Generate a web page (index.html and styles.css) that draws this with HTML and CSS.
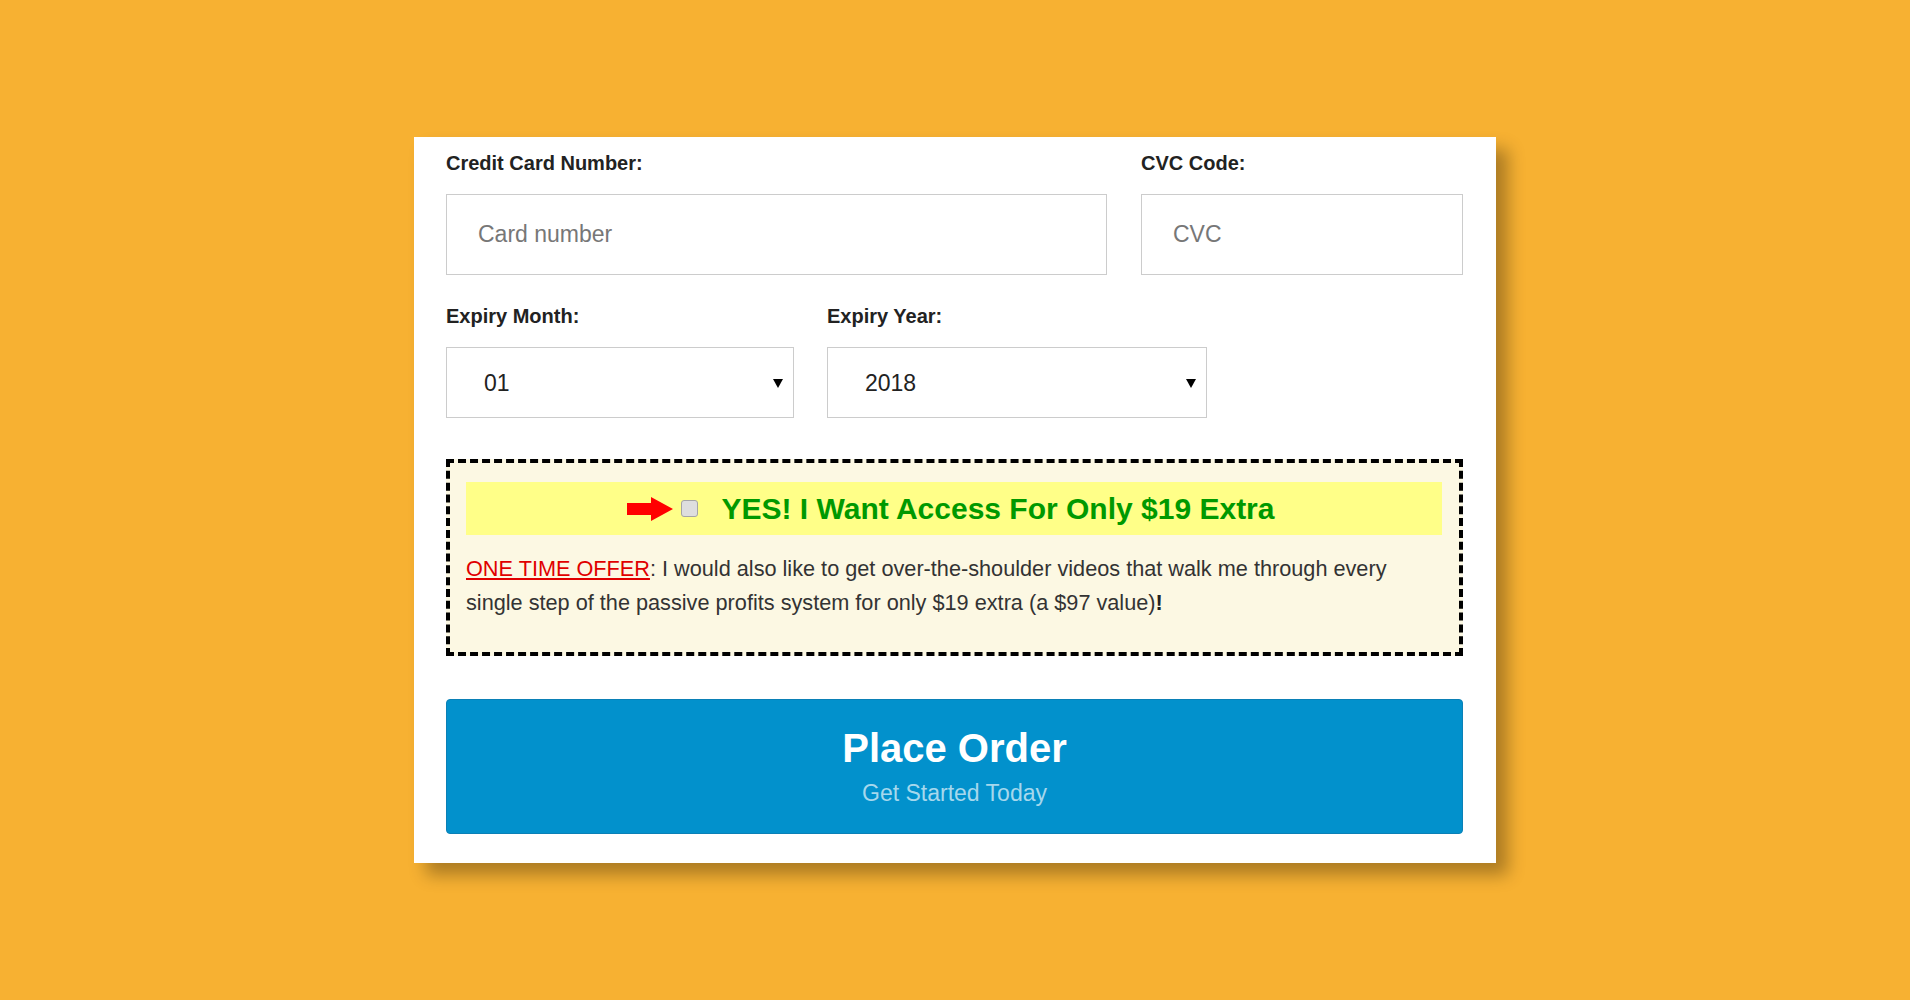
FILE: index.html
```html
<!DOCTYPE html>
<html lang="en">
<head>
<meta charset="utf-8">
<title>Checkout</title>
<link rel="stylesheet" href="styles.css">
</head>
<body>
<main class="order-card">
  <form class="order-form">
    <div class="row row-card">
      <div class="field">
        <label class="field-label" for="cc">Credit Card Number:</label>
        <input class="text-input" id="cc" type="text" placeholder="Card number">
      </div>
      <div class="field">
        <label class="field-label" for="cvc">CVC Code:</label>
        <input class="text-input" id="cvc" type="text" placeholder="CVC">
      </div>
    </div>

    <div class="row row-expiry">
      <div class="field">
        <label class="field-label" for="month">Expiry Month:</label>
        <div class="select-box">
          <select class="select-input" id="month">
            <option>01</option><option>02</option><option>03</option><option>04</option>
            <option>05</option><option>06</option><option>07</option><option>08</option>
            <option>09</option><option>10</option><option>11</option><option>12</option>
          </select>
          <svg class="caret" width="10" height="10" viewBox="0 0 10 10"><path d="M0 1h10L5 10z" fill="#000"/></svg>
        </div>
      </div>
      <div class="field">
        <label class="field-label" for="year">Expiry Year:</label>
        <div class="select-box">
          <select class="select-input" id="year">
            <option>2018</option><option>2019</option><option>2020</option><option>2021</option>
            <option>2022</option><option>2023</option>
          </select>
          <svg class="caret" width="10" height="10" viewBox="0 0 10 10"><path d="M0 1h10L5 10z" fill="#000"/></svg>
        </div>
      </div>
    </div>

    <div class="upsell">
      <label class="upsell-head">
        <svg class="upsell-arrow" width="46" height="24" viewBox="0 0 46 24"><path d="M0 6h24V0l22 12-22 12v-6H0z" fill="#ff0000"/></svg>
        <input class="upsell-check" type="checkbox">
        <span class="upsell-title">YES! I Want Access For Only $19 Extra</span>
      </label>
      <p class="upsell-text"><span class="upsell-flag">ONE TIME OFFER</span>: I would also like to get over-the-shoulder videos that walk me through every single step of the passive profits system for only $19 extra (a $97 value)<b>!</b></p>
    </div>

    <button class="order-button" type="submit">
      <span class="order-button-main">Place Order</span>
      <span class="order-button-sub">Get Started Today</span>
    </button>
  </form>
</main>
</body>
</html>
```

FILE: styles.css
```css
* {
  box-sizing: border-box;
}

html, body {
  margin: 0;
  padding: 0;
}

body {
  min-height: 100vh;
  background: #f7b132;
  display: flex;
  align-items: center;
  justify-content: center;
  font-family: "Liberation Sans", Arial, sans-serif;
  color: #333;
}

.order-card {
  width: 1082px;
  height: 726px;
  background: #fff;
  padding: 15px 33px 0 32px;
  box-shadow: 12px 12px 16px rgba(0, 0, 0, 0.3);
}

.order-form {
  display: flex;
  flex-direction: column;
}

.row {
  display: grid;
}

.row-card {
  grid-template-columns: 661px 322px;
  column-gap: 34px;
}

.row-expiry {
  grid-template-columns: 348px 380px;
  column-gap: 33px;
  margin-top: 30px;
}

.field {
  display: flex;
  flex-direction: column;
}

.field-label {
  font-size: 20px;
  line-height: 22px;
  font-weight: bold;
  color: #222;
  margin-bottom: 20px;
}

.text-input {
  height: 81px;
  border: 1px solid #ccc;
  border-radius: 0;
  padding: 0 0 0 31px;
  font-family: "Liberation Sans", Arial, sans-serif;
  font-size: 23px;
  color: #333;
  background: #fff;
  outline: none;
}

.text-input::placeholder {
  color: #777;
}

.select-box {
  height: 71px;
  border: 1px solid #ccc;
  display: flex;
  align-items: center;
  padding-right: 10px;
  background: #fff;
}

.select-input {
  flex: 1;
  height: 100%;
  border: 0;
  outline: none;
  background: transparent;
  -webkit-appearance: none;
  appearance: none;
  padding: 0 0 0 37px;
  font-family: "Liberation Sans", Arial, sans-serif;
  font-size: 23px;
  color: #222;
}

.caret {
  flex: none;
}

.upsell {
  margin-top: 41px;
  border: 4px dashed #000;
  background: #fcf8e3;
  padding: 19px 17px 32px 16px;
}

.upsell-head {
  height: 53px;
  background: #ffff88;
  display: flex;
  align-items: center;
  justify-content: center;
  padding-right: 7px;
}

.upsell-arrow {
  flex: none;
}

.upsell-check {
  -webkit-appearance: none;
  appearance: none;
  width: 17px;
  height: 17px;
  margin: 0 24px 0 8px;
  border: 1px solid #a5a5a5;
  border-radius: 3px;
  background: #dedede;
}

.upsell-title {
  font-size: 30px;
  font-weight: bold;
  color: #009900;
}

.upsell-text {
  margin: 17px 0 0;
  font-size: 21.7px;
  line-height: 34px;
  color: #333;
}

.upsell-flag {
  color: #e00000;
  text-decoration: underline;
}

.upsell-text b {
  color: #222;
}

.order-button {
  margin-top: 43px;
  height: 135px;
  border: 1px solid #0a80b6;
  border-radius: 4px;
  background: #0291cc;
  display: flex;
  flex-direction: column;
  align-items: center;
  justify-content: flex-start;
  padding: 25px 0 0;
  font-family: "Liberation Sans", Arial, sans-serif;
  cursor: pointer;
}

.order-button-main {
  font-size: 40px;
  line-height: 46px;
  font-weight: bold;
  color: #fff;
}

.order-button-sub {
  margin-top: 8px;
  font-size: 23px;
  line-height: 28px;
  color: #a6d8ed;
}
```
